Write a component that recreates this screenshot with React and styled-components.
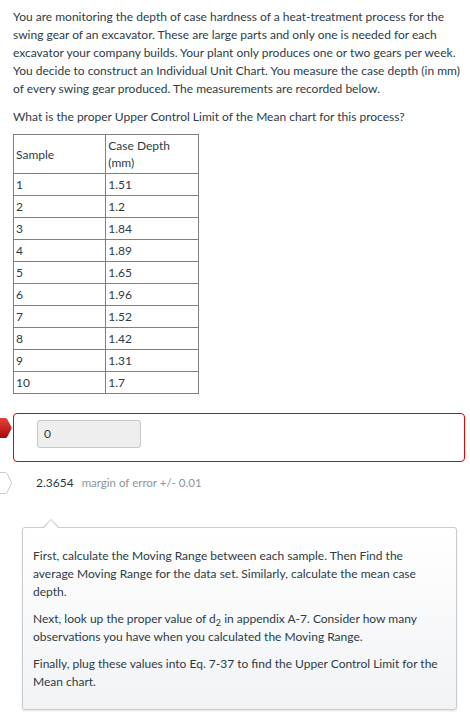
import React from 'react';
import styled, { createGlobalStyle } from 'styled-components';

const GlobalStyle = createGlobalStyle`
  body {
    margin: 0;
    background: #fff;
    font-family: Lato, "Open Sans", sans-serif;
    font-size: 12px;
    line-height: 18px;
    color: #2d3b45;
  }
`;

const Page = styled.div`
  padding: 8px 5px 10px 13px;
`;

const Text = styled.p`
  margin: 0 0 ${(p) => p.gap || 10}px;
`;

const Table = styled.table`
  border-collapse: collapse;
  border: 1px solid #808080;
  width: 186px;
  margin-bottom: 19px;
`;

const Cell = styled.td`
  border: 1px solid #808080;
  padding: 2px 3px 2px 2px;
  line-height: 17px;
  width: ${(p) => p.w}px;
  vertical-align: middle;
  text-align: left;
`;

const Answer = styled.div`
  display: flex;
  align-items: flex-start;
  margin-left: -13px;
  margin-top: ${(p) => p.top || 0}px;
`;

const Marker = styled.div`
  width: 13px;
  flex: none;
  display: flex;
  padding-top: ${(p) => p.offset}px;
`;

const AnswerBox = styled.div`
  flex: 1;
  border: 1px solid #e60000;
  border-radius: 4px;
  padding: 6px 0 13px 23px;
`;

const Input = styled.div`
  width: 104px;
  height: 28px;
  box-sizing: border-box;
  background: #eeeeee;
  border: 1px solid #c8c8c8;
  border-radius: 3px;
  padding-left: 6px;
  line-height: 26px;
  font-size: 12px;
`;

const Correct = styled.div`
  padding-left: 23px;
  line-height: 22px;
  display: flex;
  align-items: baseline;
  gap: 8px;
`;

const Value = styled.span`
  font-size: 12px;
  color: #2d3b45;
`;

const Margin = styled.span`
  font-size: 11.5px;
  color: #8b969e;
`;

const Hint = styled.div`
  position: relative;
  margin: 33px 8px 0 9px;
  border: 1px solid #c7cdd1;
  border-radius: 3px;
  background: linear-gradient(to bottom, #ffffff, #f2f3f5);
  box-shadow: 0 1px 2px rgba(0, 0, 0, 0.12);
  padding: 19px 14px 18px 10px;

  &::before,
  &::after {
    content: '';
    position: absolute;
    left: 20px;
    border-style: solid;
    border-color: transparent;
  }
  &::before {
    top: -9px;
    border-width: 0 8px 8px;
    border-bottom-color: #c7cdd1;
  }
  &::after {
    top: -8px;
    left: 21px;
    border-width: 0 7px 8px;
    border-bottom-color: #ffffff;
  }
`;

const HintText = styled.p`
  margin: 0 0 9px;
  &:last-child {
    margin-bottom: 0;
  }
`;

const Sub = styled.sub`
  font-size: 9px;
  line-height: 0;
  vertical-align: -3px;
`;

const RedMarker = () => (
  <svg width="12" height="22" viewBox="0 0 12 22">
    <defs>
      <linearGradient id="rg" x1="0" y1="0" x2="0" y2="1">
        <stop offset="0" stopColor="#e8403a" />
        <stop offset="1" stopColor="#a50a0a" />
      </linearGradient>
    </defs>
    <path d="M0 1 H5.5 Q6.5 1 7.2 2 L11.4 10 Q11.8 11 11.4 12 L7.2 20 Q6.5 21 5.5 21 H0 Z" fill="url(#rg)" />
  </svg>
);

const GrayMarker = () => (
  <svg width="12" height="22" viewBox="0 0 12 22">
    <path d="M-1 0.5 H5.5 Q6.5 0.5 7.1 1.5 L11.2 10 Q11.6 11 11.2 12 L7.1 20.5 Q6.5 21.5 5.5 21.5 H-1" fill="#fff" stroke="#c4c9cc" strokeWidth="1" />
  </svg>
);

const rows = [
  ['1', '1.51'],
  ['2', '1.2'],
  ['3', '1.84'],
  ['4', '1.89'],
  ['5', '1.65'],
  ['6', '1.96'],
  ['7', '1.52'],
  ['8', '1.42'],
  ['9', '1.31'],
  ['10', '1.7'],
];

const App = () => {
  return (
    <Page>
      <GlobalStyle />
      <Text>
        You are monitoring the depth of case hardness of a heat-treatment process for the swing gear of an
        excavator. These are large parts and only one is needed for each excavator your company builds. Your
        plant only produces one or two gears per week. You decide to construct an Individual Unit Chart. You
        measure the case depth (in mm) of every swing gear produced. The measurements are recorded below.
      </Text>
      <Text gap={8}>What is the proper Upper Control Limit of the Mean chart for this process?</Text>
      <Table>
        <tbody>
          <tr>
            <Cell w={92}>Sample</Cell>
            <Cell w={93}>
              Case Depth
              <br />
              (mm)
            </Cell>
          </tr>
          {rows.map(([s, d]) => (
            <tr key={s}>
              <Cell w={92}>{s}</Cell>
              <Cell w={93}>{d}</Cell>
            </tr>
          ))}
        </tbody>
      </Table>
      <Answer>
        <Marker offset={4}>
          <RedMarker />
        </Marker>
        <AnswerBox>
          <Input>0</Input>
        </AnswerBox>
      </Answer>
      <Answer top={10}>
        <Marker offset={0}>
          <GrayMarker />
        </Marker>
        <Correct>
          <Value>2.3654</Value>
          <Margin>margin of error +/- 0.01</Margin>
        </Correct>
      </Answer>
      <Hint>
        <HintText>
          First, calculate the Moving Range between each sample. Then Find the average Moving Range for the
          data set. Similarly, calculate the mean case depth.
        </HintText>
        <HintText>
          Next, look up the proper value of d<Sub>2</Sub> in appendix A-7. Consider how many observations you
          have when you calculated the Moving Range.
        </HintText>
        <HintText>
          Finally, plug these values into Eq. 7-37 to find the Upper Control Limit for the Mean chart.
        </HintText>
      </Hint>
    </Page>
  );
};

export default App;
